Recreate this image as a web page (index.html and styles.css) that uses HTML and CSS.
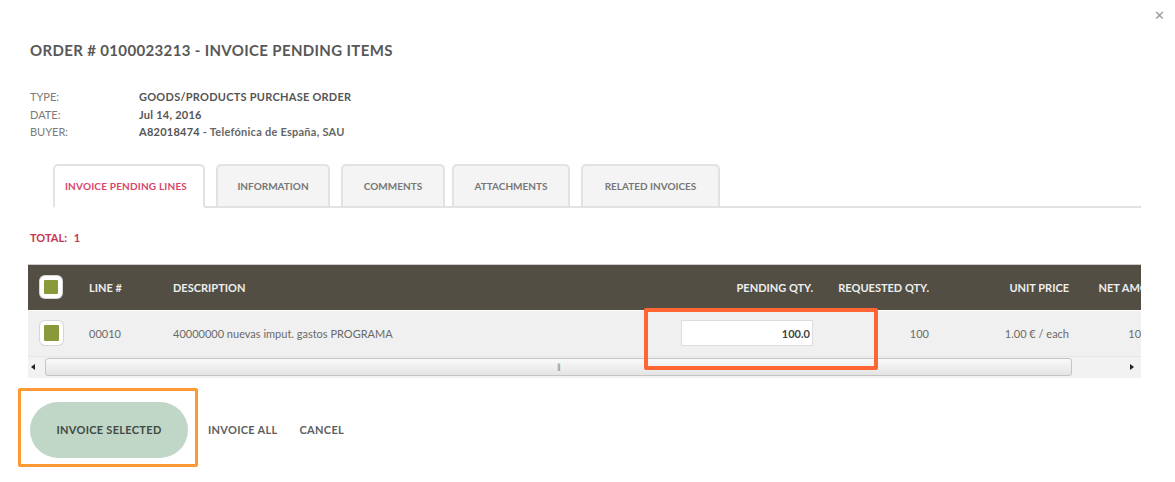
FILE: index.html
```html
<!DOCTYPE html>
<html lang="en">
<head>
    <meta charset="UTF-8">
    <title>Invoice Pending Items</title>
    <link rel="stylesheet" href="styles.css">
</head>
<body>
    <div class="modal">
        <span class="close">&#x2715;</span>

        <h1 class="title">ORDER # 0100023213 - INVOICE PENDING ITEMS</h1>

        <div class="meta">
            <div class="meta-row"><span class="meta-label">TYPE:</span><span class="meta-value">GOODS/PRODUCTS PURCHASE ORDER</span></div>
            <div class="meta-row"><span class="meta-label">DATE:</span><span class="meta-value">Jul 14, 2016</span></div>
            <div class="meta-row"><span class="meta-label">BUYER:</span><span class="meta-value">A82018474 <span class="light">- Telefónica de España, SAU</span></span></div>
        </div>

        <div class="tabs">
            <div class="tab active">INVOICE PENDING LINES</div>
            <div class="tab">INFORMATION</div>
            <div class="tab">COMMENTS</div>
            <div class="tab">ATTACHMENTS</div>
            <div class="tab">RELATED INVOICES</div>
        </div>

        <div class="total">TOTAL: <span class="total-num">1</span></div>

        <div class="grid-wrap">
            <div class="grid">
                <div class="grid-row grid-head">
                    <div class="cell"><span class="check"></span></div>
                    <div class="cell">LINE #</div>
                    <div class="cell">DESCRIPTION</div>
                    <div class="cell right">PENDING QTY.</div>
                    <div class="cell right">REQUESTED QTY.</div>
                    <div class="cell right">UNIT PRICE</div>
                    <div class="cell right">NET AMOUNT</div>
                </div>
                <div class="grid-row grid-line">
                    <div class="cell"><span class="check"></span></div>
                    <div class="cell">00010</div>
                    <div class="cell">40000000 nuevas imput. gastos PROGRAMA</div>
                    <div class="cell right"><input class="qty-input" type="text" value="100.0"></div>
                    <div class="cell right">100</div>
                    <div class="cell right">1.00 € / each</div>
                    <div class="cell right">100.00 €</div>
                </div>
            </div>
            <div class="hscroll">
                <span class="arrow left"></span>
                <div class="thumb"><span class="grip">|||</span></div>
                <span class="arrow right"></span>
            </div>
            <div class="mark mark-qty"></div>
        </div>

        <div class="actions">
            <div class="mark-btn">
                <button class="btn-primary">INVOICE SELECTED</button>
            </div>
            <a class="link">INVOICE ALL</a>
            <a class="link">CANCEL</a>
        </div>
    </div>
</body>
</html>
```

FILE: styles.css
```css
* {
    margin: 0;
    padding: 0;
    box-sizing: border-box;
}

body {
    font-family: Lato, 'Open Sans', sans-serif;
    background: white;
    color: #666;
}

.modal {
    position: relative;
    width: 1175px;
    height: 482px;
    padding: 40px 34px 0 30px;
}

.close {
    position: absolute;
    top: 8px;
    right: 10px;
    font-size: 13px;
    color: #999;
    font-family: 'DejaVu Sans', sans-serif;
}

.title {
    font-size: 15px;
    line-height: 20px;
    font-weight: 700;
    color: #585858;
    letter-spacing: 0.35px;
}

.meta {
    margin-top: 28px;
    font-size: 11px;
}

.meta-row {
    display: flex;
    line-height: 17.5px;
}

.meta-label {
    width: 109px;
    color: #7a7a7a;
}

.meta-value {
    font-weight: 700;
    color: #555;
    letter-spacing: 0.25px;
}

.meta-value .light {
    color: #666;
}

.tabs {
    display: flex;
    gap: 11px;
    margin-top: 23px;
    margin-left: 23px;
    height: 44px;
    border-bottom: 2px solid #e2e2e2;
}

.tab {
    display: flex;
    align-items: center;
    justify-content: center;
    height: 44px;
    padding: 0 4px;
    white-space: nowrap;
    font-size: 10px;
    font-weight: 700;
    color: #777;
    background: #f4f4f4;
    border: 2px solid #e2e2e2;
    border-radius: 5px 5px 0 0;
}

.tab:nth-child(1) { width: 152px; padding-right: 10px; letter-spacing: 0.2px; }
.tab:nth-child(2) { width: 114px; }
.tab:nth-child(3) { width: 104px; }
.tab:nth-child(4) { width: 118px; margin-left: -4px; }
.tab:nth-child(5) { width: 139px; }

.tab.active {
    background: white;
    color: #d9456b;
    border-bottom-color: white;
}

.total {
    margin-top: 22px;
    font-size: 11px;
    line-height: 16px;
    font-weight: 700;
    color: #c8334f;
}

.total-num {
    margin-left: 4px;
}

.grid-wrap {
    position: relative;
    margin-top: 18px;
    margin-left: -2px;
    width: 1113px;
}

.grid {
    overflow: hidden;
}

.grid-row {
    display: grid;
    grid-template-columns: 61px 84px 500px 140px 116px 140px 103px;
    width: 1151px;
    align-items: center;
    height: 46px;
    font-size: 11px;
}

.grid-head {
    background: #524e44;
    color: #eee;
    font-weight: 700;
    border-top: 1px solid #ccc;
}

.grid-line {
    background: #f0f0f0;
    color: #6a6a6a;
    border-top: 1px solid #fff;
}

.cell {
    white-space: nowrap;
}

.cell.right {
    text-align: right;
}

.check {
    display: block;
    width: 22px;
    height: 22px;
    margin-left: 12px;
    background: #8a993a;
    border: 4px solid white;
    border-radius: 5px;
    box-shadow: 0 0 0 1px #d6d6d6;
}

.grid-line .check {
    width: 23px;
    height: 24px;
}

.qty-input {
    width: 132px;
    height: 26px;
    border: 1px solid #ddd;
    background: white;
    text-align: right;
    padding-right: 2px;
    font-family: Lato, sans-serif;
    font-size: 11px;
    font-weight: 700;
    color: #444;
}

.hscroll {
    display: flex;
    align-items: center;
    height: 22px;
    background: #f2f2f2;
    border-top: 1px solid #e6e6e6;
}

.arrow {
    width: 0;
    height: 0;
    border-top: 3px solid transparent;
    border-bottom: 3px solid transparent;
}

.arrow.left {
    margin-left: 3px;
    border-right: 4px solid #222;
}

.arrow.right {
    margin-left: 58px;
    border-left: 4px solid #222;
}

.thumb {
    width: 1027px;
    height: 18px;
    margin-left: 10px;
    border: 1px solid #c4c4c4;
    border-radius: 3px;
    background: linear-gradient(#fafafa, #e4e4e4);
    display: flex;
    align-items: center;
    justify-content: center;
}

.grip {
    font-size: 7px;
    color: #777;
    letter-spacing: -1px;
}

.mark {
    position: absolute;
    border: 4px solid #ff6633;
    border-radius: 2px;
}

.mark-qty {
    left: 616px;
    top: 44px;
    width: 234px;
    height: 62px;
}

.actions {
    display: flex;
    align-items: center;
    margin-top: 10px;
    margin-left: -12px;
}

.mark-btn {
    border: 3px solid #ff9933;
    border-radius: 2px;
    padding: 11px 7px 6px 9px;
}

.btn-primary {
    width: 158px;
    height: 56px;
    border: none;
    border-radius: 28px;
    background: #c0d6c6;
    color: #3f4a44;
    font-family: Lato, sans-serif;
    font-size: 11px;
    font-weight: 700;
    letter-spacing: 0.3px;
}

.link {
    margin-left: 10px;
    padding-top: 5px;
    font-size: 11px;
    font-weight: 700;
    color: #5e5e5e;
    letter-spacing: 0.3px;
}

.link + .link {
    margin-left: 22px;
}
```
